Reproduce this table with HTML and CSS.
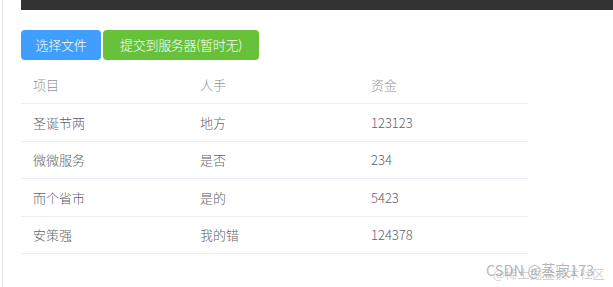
FILE: index.html
```html
<!DOCTYPE html>
<html lang="zh">
<head>
<meta charset="utf-8">
<link rel="stylesheet" href="styles.css">
</head>
<body>
<div class="frame">
  <div class="topbar"></div>
  <div class="actions">
    <button class="btn btn-blue">选择文件</button>
    <button class="btn btn-green">提交到服务器(暂时无)</button>
  </div>
  <div class="table">
    <div class="row head">
      <div class="cell">项目</div><div class="cell">人手</div><div class="cell">资金</div>
    </div>
    <div class="row">
      <div class="cell">圣诞节两</div><div class="cell">地方</div><div class="cell">123123</div>
    </div>
    <div class="row">
      <div class="cell">微微服务</div><div class="cell">是否</div><div class="cell">234</div>
    </div>
    <div class="row">
      <div class="cell">而个省市</div><div class="cell">是的</div><div class="cell">5423</div>
    </div>
    <div class="row">
      <div class="cell">安策强</div><div class="cell">我的错</div><div class="cell">124378</div>
    </div>
  </div>
</div>
<div class="watermark">
  <span class="wm1">CSDN @蒸寂173</span>
  <span class="wm2">@稀土掘金技术社区</span>
</div>
</body>
</html>
```

FILE: styles.css
```css
html, body {
  margin: 0;
  padding: 0;
  background: #fff;
  height: 100%;
  overflow: hidden;
  font-family: "Noto Sans CJK SC", "Liberation Sans", sans-serif;
}
.frame {
  margin-left: 2px;
  border-left: 1px solid #e4e4e4;
  padding-left: 18px;
  height: 100%;
  box-sizing: border-box;
}
.topbar {
  height: 10px;
  background: #333333;
}
.actions {
  display: flex;
  gap: 2px;
  margin-top: 20px;
}
.btn {
  height: 30px;
  border: none;
  border-radius: 4px;
  color: #fff;
  font-family: "Noto Sans CJK SC", sans-serif;
  font-size: 13px;
  font-weight: 300;
  padding: 0 14px;
  line-height: 30px;
  letter-spacing: -0.3px;
}
.btn-blue {
  background: #409eff;
  width: 80px;
}
.btn-green {
  background: #67c23a;
  width: 156px;
  padding: 0;
}
.table {
  margin-top: 6.5px;
  width: 507px;
}
.row {
  display: grid;
  grid-template-columns: 167px 171px 169px;
  height: 37.5px;
  border-bottom: 1px solid #ebeef5;
  box-sizing: border-box;
  align-items: center;
  font-size: 13px;
  font-weight: 300;
  color: #606266;
}
.row.head {
  color: #909399;
}
.cell {
  padding-left: 12px;
}
.watermark {
  position: absolute;
  left: 484px;
  top: 259px;
  width: 129px;
  height: 28px;
  font-family: "Noto Sans CJK SC", "Liberation Sans", sans-serif;
}
.wm1 {
  position: absolute;
  left: 2px;
  top: 0;
  font-size: 14.5px;
  white-space: nowrap;
  color: rgba(110, 110, 110, 0.5);
}
.wm2 {
  position: absolute;
  left: 9px;
  top: 5px;
  font-size: 12.5px;
  white-space: nowrap;
  color: rgba(150, 150, 150, 0.45);
}
```
